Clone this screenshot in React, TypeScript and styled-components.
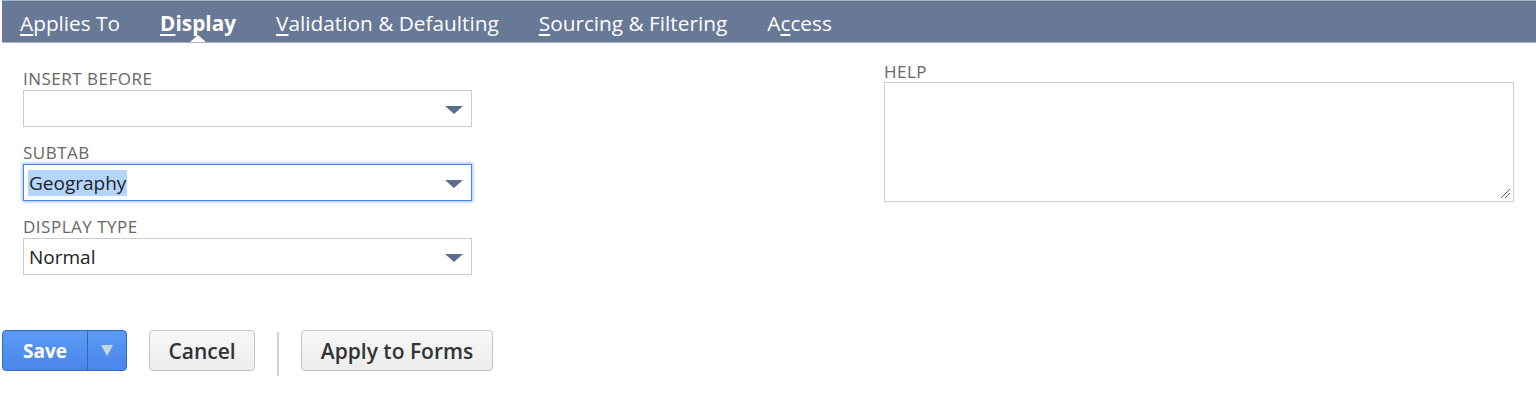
import React from "react";
import styled, { createGlobalStyle } from "styled-components";

const Global = createGlobalStyle`
  html, body { margin: 0; padding: 0; background: #fff; }
  body { font-family: "Open Sans", "Liberation Sans", sans-serif; }
  * { box-sizing: border-box; }
`;

const Page = styled.div`
  width: 1536px;
  height: 394px;
  display: flex;
  flex-direction: column;
`;

const TabBar = styled.nav`
  height: 43px;
  margin-left: 2px;
  background: #687897;
  border-top: 1px solid #aab3c6;
  border-bottom: 1px solid #a9b3c8;
  display: flex;
  align-items: flex-start;
  padding-left: 18px;
  gap: 40px;
`;

const Tab = styled.span<{ $active?: boolean }>`
  position: relative;
  color: #fff;
  font-size: 20.8px;
  font-weight: ${(p) => (p.$active ? 700 : 400)};
  line-height: 38px;
  height: 41px;
  padding-top: 3px;
  u { text-decoration: underline; text-underline-offset: 3px; text-decoration-thickness: 1.5px; }
  ${(p) =>
    p.$active &&
    `
    &::after {
      content: "";
      position: absolute;
      left: 50%;
      bottom: 0;
      transform: translateX(-50%);
      border-left: 8px solid transparent;
      border-right: 8px solid transparent;
      border-bottom: 7px solid #fff;
    }
  `}
`;

const Body = styled.div`
  display: flex;
  padding: 0 0 0 23px;
`;

const LeftCol = styled.div`
  width: 449px;
  display: flex;
  flex-direction: column;
  padding-top: 25px;
`;

const RightCol = styled.div`
  margin-left: 412px;
  width: 630px;
  padding-top: 18px;
  display: flex;
  flex-direction: column;
`;

const Field = styled.div`
  display: flex;
  flex-direction: column;
  margin-bottom: 15px;
`;

const Label = styled.label`
  color: #666;
  font-size: 17px;
  line-height: 22px;
  height: 22px;
  text-transform: uppercase;
  letter-spacing: 0.5px;
`;

const Select = styled.div<{ $focus?: boolean }>`
  height: 37px;
  border: 1px solid ${(p) => (p.$focus ? "#4a86e8" : "#cccccc")};
  box-shadow: ${(p) => (p.$focus ? "0 0 3px 1px rgba(77,144,254,0.55)" : "none")};
  display: flex;
  align-items: center;
  justify-content: space-between;
  padding: 0 8px 0 4px;
  font-size: 19px;
  color: #222;
`;

const Value = styled.span<{ $selected?: boolean }>`
  padding: 0 1px;
  line-height: 26px;
  background: ${(p) => (p.$selected ? "#b4d5fe" : "transparent")};
`;

const Arrow = styled.span`
  width: 0;
  height: 0;
  border-left: 9px solid transparent;
  border-right: 9px solid transparent;
  border-top: 8px solid #5c6c8c;
  margin-top: 2px;
`;

const TextArea = styled.div`
  position: relative;
  height: 120px;
  border: 1px solid #cfcfcf;
  margin-top: -1px;
`;

const Grip = styled.svg`
  position: absolute;
  right: 2px;
  bottom: 2px;
`;

const ButtonRow = styled.div`
  display: flex;
  align-items: flex-start;
  padding-left: 2px;
  margin-top: 40px;
`;

const SplitButton = styled.div`
  display: flex;
  height: 41px;
  width: 125px;
  border: 1px solid #2f6bc8;
  border-radius: 4px;
  background: linear-gradient(#5b9af4, #4a86ea);
  overflow: hidden;
`;

const SaveMain = styled.span`
  width: 85px;
  display: flex;
  align-items: center;
  justify-content: center;
  color: #fff;
  font-weight: 700;
  font-size: 19px;
  border-right: 1px solid #2f66c0;
`;

const SaveArrow = styled.span`
  flex: 1;
  display: flex;
  align-items: center;
  justify-content: center;
  &::before {
    content: "";
    border-left: 6px solid transparent;
    border-right: 6px solid transparent;
    border-top: 11px solid #c8d3e4;
  }
`;

const GrayButton = styled.button<{ $w: number }>`
  height: 41px;
  width: ${(p) => p.$w}px;
  border: 1px solid #c4c4c4;
  border-radius: 4px;
  background: linear-gradient(#f8f8f8, #ececec);
  font-family: "Open Sans", "Liberation Sans", sans-serif;
  font-weight: 600;
  font-size: 21px;
  color: #333;
  padding: 0;
`;

const Divider = styled.span`
  width: 2px;
  height: 44px;
  background: #d4d4d4;
  margin: 2px 22px 0 22px;
`;

export default function App() {
  return (
    <Page>
      <Global />
      <TabBar>
        <Tab><u>A</u>pplies To</Tab>
        <Tab $active><u>D</u>isplay</Tab>
        <Tab><u>V</u>alidation &amp; Defaulting</Tab>
        <Tab><u>S</u>ourcing &amp; Filtering</Tab>
        <Tab>A<u>c</u>cess</Tab>
      </TabBar>
      <Body>
        <LeftCol>
          <Field>
            <Label>Insert Before</Label>
            <Select><span /><Arrow /></Select>
          </Field>
          <Field>
            <Label>Subtab</Label>
            <Select $focus>
              <Value $selected>Geography</Value>
              <Arrow />
            </Select>
          </Field>
          <Field>
            <Label>Display Type</Label>
            <Select>
              <Value>Normal</Value>
              <Arrow />
            </Select>
          </Field>
        </LeftCol>
        <RightCol>
          <Label>Help</Label>
          <TextArea>
            <Grip width="12" height="12" viewBox="0 0 12 12">
              <line x1="11" y1="2" x2="2" y2="11" stroke="#666" strokeWidth="1" />
              <line x1="11" y1="6" x2="6" y2="11" stroke="#666" strokeWidth="1" />
            </Grip>
          </TextArea>
        </RightCol>
      </Body>
      <ButtonRow>
        <SplitButton>
          <SaveMain>Save</SaveMain>
          <SaveArrow />
        </SplitButton>
        <GrayButton $w={106} style={{ marginLeft: 22 }}>Cancel</GrayButton>
        <Divider />
        <GrayButton $w={192}>Apply to Forms</GrayButton>
      </ButtonRow>
    </Page>
  );
}
